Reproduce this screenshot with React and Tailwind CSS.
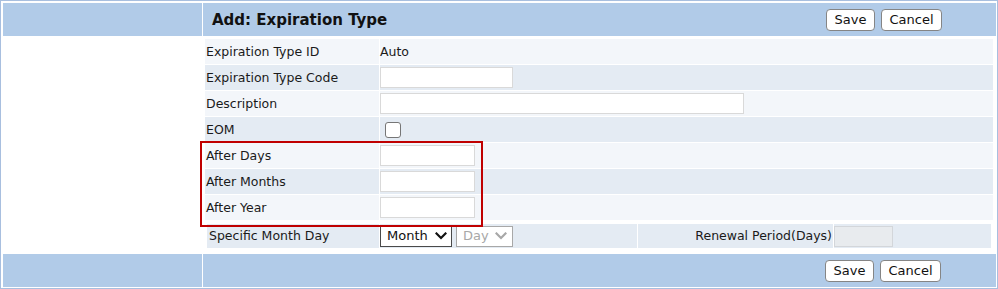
import React from "react";

function Btn({ children, w }) {
  return (
    <div
      className={`h-[22px] ${w} flex items-center justify-center border border-[#858585] rounded-[4px] bg-white text-[13px] text-[#111]`}
    >
      {children}
    </div>
  );
}

function Chevron({ color }) {
  return (
    <svg width="12" height="8" viewBox="0 0 12 8" className="shrink-0">
      <path d="M1.5 1.5 L6 6 L10.5 1.5" fill="none" stroke={color} strokeWidth="2.2" strokeLinecap="square" />
    </svg>
  );
}

function Row({ label, light, children }) {
  return (
    <div className="flex h-[25px] gap-[1px]">
      <div className={`w-[174px] flex items-center pl-[1px] pt-[2px] ${light ? "bg-[#f3f6fa]" : "bg-[#e4ebf3]"}`}>
        {label}
      </div>
      <div className={`flex-1 flex items-center ${light ? "bg-[#f3f6fa]" : "bg-[#e4ebf3]"}`}>{children}</div>
    </div>
  );
}

function Input({ w }) {
  return <div className={`${w} h-[21px] bg-white border border-[#d9d9d9]`} />;
}

export default function App() {
  return (
    <div className="w-[998px] h-[289px] border border-[#a8bfdf] bg-white pl-[2px] pr-[1px] pt-[2px] pb-[1px] flex flex-col gap-[1px] font-['DejaVu_Sans',sans-serif] text-[12.5px] text-[#1a1a1a] relative">
      {/* header */}
      <div className="flex h-[33px] gap-[1px]">
        <div className="w-[199px] bg-[#b1cbe8]" />
        <div className="flex-1 bg-[#b1cbe8] flex items-center justify-between pl-[9px] pr-[54px]">
          <div className="font-bold text-[15px] text-[#111] pt-[1px]">Add: Expiration Type</div>
          <div className="flex gap-[6px]">
            <Btn w="w-[49px]">Save</Btn>
            <Btn w="w-[61px]">Cancel</Btn>
          </div>
        </div>
      </div>

      {/* body */}
      <div className="flex h-[216px] gap-[1px]">
        <div className="w-[199px] bg-white" />
        <div className="flex-1 bg-white pt-[2px] pl-[2px] pr-[3px] flex flex-col">
          <div className="flex flex-col gap-[1px]">
            <Row label="Expiration Type ID" light>
              <span className="pt-[2px]">Auto</span>
            </Row>
            <Row label="Expiration Type Code">
              <Input w="w-[133px]" />
            </Row>
            <Row label="Description" light>
              <Input w="w-[364px]" />
            </Row>
            <Row label="EOM">
              <div className="ml-[5px] w-[16px] h-[16px] rounded-[3px] border border-[#767676] bg-white" />
            </Row>
            <Row label="After Days" light>
              <Input w="w-[95px]" />
            </Row>
            <Row label="After Months">
              <Input w="w-[95px]" />
            </Row>
            <Row label="After Year" light>
              <Input w="w-[95px]" />
            </Row>
          </div>
          <div className="mt-[4px] mx-[2px] flex h-[24px] gap-[1px]">
            <div className="w-[172px] bg-[#e4ebf3] flex items-center pl-[2px] pt-[1px]">Specific Month Day</div>
            <div className="w-[257px] bg-[#e4ebf3] flex items-center gap-[4px]">
              <div className="w-[72px] h-[21px] border border-[#4a4a4a] bg-white flex items-center justify-between pl-[6px] pr-[4px] text-[13px] text-[#111]">
                <span>Month</span>
                <Chevron color="#111" />
              </div>
              <div className="w-[57px] h-[21px] border border-[#a8a8a8] bg-white flex items-center justify-between pl-[6px] pr-[5px] text-[13px] text-[#a8a8a8]">
                <span>Day</span>
                <Chevron color="#a8a8a8" />
              </div>
            </div>
            <div className="w-[195px] bg-[#e4ebf3] flex items-center justify-end pr-[1px] pt-[1px]">Renewal Period(Days)</div>
            <div className="flex-1 bg-[#e4ebf3] flex items-center">
              <div className="w-[59px] h-[21px] bg-[#e8ebee] border border-[#d3d6da]" />
            </div>
          </div>
        </div>
      </div>

      {/* footer */}
      <div className="flex h-[33px] gap-[1px]">
        <div className="w-[199px] bg-[#b1cbe8]" />
        <div className="flex-1 bg-[#b1cbe8] flex items-center justify-end pr-[55px]">
          <div className="flex gap-[6px]">
            <Btn w="w-[49px]">Save</Btn>
            <Btn w="w-[61px]">Cancel</Btn>
          </div>
        </div>
      </div>

      {/* annotation */}
      <div className="absolute left-[199px] top-[140px] w-[283px] h-[86px] border-[2.5px] border-[#c00000] pointer-events-none" />
    </div>
  );
}
